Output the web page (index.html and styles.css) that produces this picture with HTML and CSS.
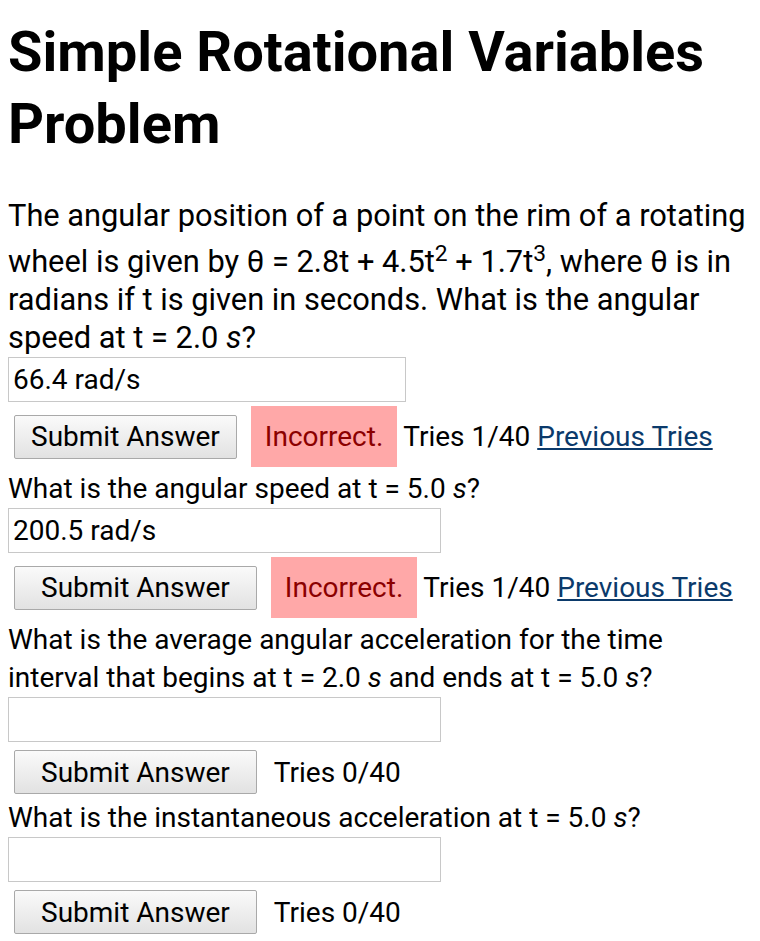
FILE: index.html
```html
<!DOCTYPE html>
<html lang="en">
<head>
    <meta charset="UTF-8">
    <meta name="viewport" content="width=device-width, initial-scale=1.0">
    <title>Simple Rotational Variables Problem</title>
    <link rel="stylesheet" href="styles.css">
</head>
<body>

<h1>Simple Rotational Variables Problem</h1>

<div class="problem">
    <p class="intro">The angular position of a point on the rim of a rotating wheel is given by &theta; = 2.8t + 4.5t<sup>2</sup> + 1.7t<sup>3</sup>, where &theta; is in radians if t is given in seconds. What is the angular speed at t = 2.0 <i>s</i>?</p>
    <input type="text" class="answer short" value="66.4 rad/s">
    <div class="row">
        <button class="submit narrow">Submit Answer</button>
        <span class="incorrect">Incorrect.</span>
        <span class="tries">Tries 1/40 <a href="#">Previous Tries</a></span>
    </div>
</div>

<div class="problem">
    <p>What is the angular speed at t = 5.0 <i>s</i>?</p>
    <input type="text" class="answer" value="200.5 rad/s">
    <div class="row">
        <button class="submit">Submit Answer</button>
        <span class="incorrect">Incorrect.</span>
        <span class="tries">Tries 1/40 <a href="#">Previous Tries</a></span>
    </div>
</div>

<div class="problem">
    <p>What is the average angular acceleration for the time interval that begins at t = 2.0 <i>s</i> and ends at t = 5.0 <i>s</i>?</p>
    <input type="text" class="answer" value="">
    <div class="row plain-row">
        <button class="submit">Submit Answer</button>
        <span class="tries plain">Tries 0/40</span>
    </div>
</div>

<div class="problem">
    <p>What is the instantaneous acceleration at t = 5.0 <i>s</i>?</p>
    <input type="text" class="answer" value="">
    <div class="row plain-row">
        <button class="submit">Submit Answer</button>
        <span class="tries plain">Tries 0/40</span>
    </div>
</div>

</body>
</html>
```

FILE: styles.css
```css
body {
    margin: 8px;
    font-family: Roboto, "Liberation Sans", sans-serif;
    font-size: 28px;
    color: #000;
    background-color: #fff;
}

h1 {
    margin: 8px 0 37px 0;
    font-size: 56px;
    line-height: 72px;
    font-weight: bold;
}

p {
    margin: 0;
    line-height: 38px;
}

/* 첫 문제 설명은 글씨가 조금 더 큼 */
.intro {
    font-size: 30.8px;
}

sup {
    font-size: 0.74em;
}

/* answer box */
.answer {
    display: block;
    box-sizing: border-box;
    width: 433px;
    height: 45px;
    margin: 0 0 4px 0;
    padding: 0 4px;
    border: 1px solid #c8c8c8;
    font-family: inherit;
    font-size: 28px;
    color: #000;
}

.answer.short {
    width: 398px;
}

/* submit row */
.row {
    display: flex;
    align-items: center;
    margin-bottom: 3px;
}

.plain-row {
    margin-bottom: 1px;
}

.submit {
    box-sizing: border-box;
    height: 44px;
    margin: 4px 0 4px 6px;
    padding: 0 26px;
    border: 1px solid #a9a9a9;
    border-radius: 2px;
    background: linear-gradient(#fafafa, #e2e2e2);
    font-family: inherit;
    font-size: 28px;
    color: #000;
}

.submit.narrow {
    padding: 0 16px;
}

.incorrect {
    display: flex;
    align-items: center;
    height: 61px;
    margin-left: 14px;
    padding: 0 14px;
    background-color: #ffa8a8;
    color: #8b0000;
}

.tries {
    margin-left: 6px;
}

.tries.plain {
    margin-left: 17px;
}

.tries a {
    color: #0b3a6b;
}
```
